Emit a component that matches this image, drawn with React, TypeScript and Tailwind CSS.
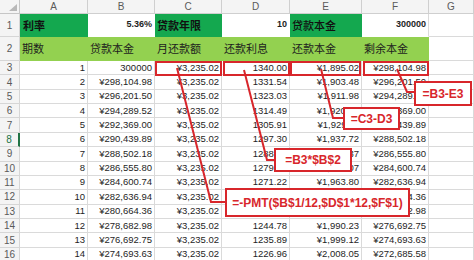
import React from "react";

const cols = ["A", "B", "C", "D", "E", "F", "G"];

const colB = [
  "300000", "¥298,104.98", "¥296,201.50", "¥294,289.52", "¥292,369.00", "¥290,439.89", "¥288,502.18",
  "¥286,555.80", "¥284,600.74", "¥282,636.94", "¥280,664.36", "¥278,682.98", "¥276,692.75", "¥274,693.63",
];
const colD = [
  "1340.00", "1331.54", "1323.03", "1314.49", "1305.91", "1297.30", "1288.64",
  "1279.95", "1271.22", "1262.44", "1253.63", "1244.78", "1235.89", "1226.96",
];
const colE = [
  "¥1,895.02", "¥1,903.48", "¥1,911.98", "¥1,920.53", "¥1,929.11", "¥1,937.72", "¥1,946.37",
  "¥1,955.07", "¥1,963.80", "¥1,972.58", "¥1,981.39", "¥1,990.23", "¥1,999.12", "¥2,008.05",
];
const colF = [
  "¥298,104.98", "¥296,201.50", "¥294,289.52", "¥292,369.00", "¥290,439.89", "¥288,502.18", "¥286,555.80",
  "¥284,600.74", "¥282,636.94", "¥280,664.36", "¥278,682.98", "¥276,692.75", "¥274,693.63", "¥272,685.58",
];

const CJK = { fontFamily: '"Noto Sans CJK SC", "Liberation Sans", sans-serif' };
const NUM = { fontFamily: '"Liberation Sans", "Noto Sans CJK SC", sans-serif' };

function Num({ children, bold }: { children: React.ReactNode; bold?: boolean }) {
  return (
    <div
      className={`flex items-center justify-end pr-[2px] border-r border-b border-[#dadada] text-[#1e1e1e] ${bold ? "font-bold text-[9px]" : "text-[9.5px]"}`}
      style={NUM}
    >
      {children}
    </div>
  );
}

export default function App() {
  const dataRows = colB.map((b, i) => ({
    n: i + 3,
    a: String(i + 1),
    b,
    c: "¥3,235.02",
    d: colD[i],
    e: colE[i],
    f: colF[i],
  }));

  return (
    <div className="relative w-[474px] h-[260px] overflow-hidden bg-white" style={NUM}>
      <div className="grid grid-cols-[20px_68px_67px_67px_68px_72px_67px_45px] grid-rows-[14px_23px_24px_repeat(14,14.36px)]">
        {/* corner */}
        <div className="relative bg-[#f4f4f4] border-r border-b border-[#c6c6c6]">
          <svg className="absolute left-[9px] top-[4px]" width="8" height="7" viewBox="0 0 8 7">
            <polygon points="8,0 8,7 0,7" fill="#b8b8b8" />
          </svg>
        </div>
        {cols.map((c) => (
          <div
            key={c}
            className="flex items-center justify-center bg-[#f4f4f4] border-r border-b border-[#cfcfcf] text-[10px] text-[#5a5a5a]"
          >
            {c}
          </div>
        ))}

        {/* row 1 */}
        <div className="flex items-center justify-center bg-[#f4f4f4] border-r border-b border-[#d6d6d6] text-[10px] text-[#5a5a5a]">1</div>
        <div className="flex items-center pl-[3px] bg-[#14a84f] border-r border-b border-[#14a84f] text-[11px] font-bold text-[#111]" style={CJK}>利率</div>
        <div className="flex items-center justify-end pr-[2px] border-r border-b border-white text-[9px] font-bold text-[#1e1e1e]">5.36%</div>
        <div className="flex items-center pl-[2px] bg-[#14a84f] border-r border-b border-[#14a84f] text-[11px] font-bold text-[#111]" style={CJK}>贷款年限</div>
        <div className="flex items-center justify-end pr-[2px] border-r border-b border-white text-[9px] font-bold text-[#1e1e1e]">10</div>
        <div className="flex items-center pl-[2px] bg-[#14a84f] border-r border-b border-[#14a84f] text-[11px] font-medium text-[#111]" style={CJK}>贷款本金</div>
        <div className="flex items-center justify-end pr-[2px] border-r border-r-[#dadada] border-b border-b-white text-[9px] font-bold text-[#1e1e1e]">300000</div>
        <div className="border-r border-b border-[#dadada]" />

        {/* row 2 */}
        <div className="flex items-center justify-center bg-[#f4f4f4] border-r border-b border-[#d6d6d6] text-[10px] text-[#5a5a5a]">2</div>
        {["期数", "贷款本金", "月还款额", "还款利息", "还款本金", "剩余本金"].map((t) => (
          <div key={t + "h"} className="flex items-center pl-[2px] bg-[#93d150] border-r border-b border-[#93d150] text-[11px] text-[#1e1e1e]" style={CJK}>
            {t}
          </div>
        ))}
        <div className="border-r border-b border-[#dadada]" />

        {dataRows.map((r) => (
          <React.Fragment key={r.n}>
            <div
              className={`flex items-center justify-center bg-[#f4f4f4] border-b border-[#d6d6d6] text-[10px] ${r.n === 8 ? "text-[#217346] border-r-2 border-r-[#217346]" : "text-[#5a5a5a] border-r"}`}
            >
              {r.n}
            </div>
            <Num>{r.a}</Num>
            <Num>{r.b}</Num>
            <Num>{r.c}</Num>
            <Num>{r.d}</Num>
            <Num>{r.e}</Num>
            <Num>{r.f}</Num>
            <div className="border-r border-b border-[#dadada]" />
          </React.Fragment>
        ))}
      </div>

      {/* red outlines on row 3 */}
      <div className="absolute left-[155px] top-[61px] w-[67px] h-[15px] border-2 border-[#d8262b]" />
      <div className="absolute left-[223px] top-[61px] w-[67px] h-[15px] border-2 border-[#d8262b]" />
      <div className="absolute left-[290px] top-[61px] w-[71px] h-[15px] border-2 border-[#d8262b]" />
      <div className="absolute left-[363px] top-[61px] w-[66px] h-[15px] border-2 border-[#d8262b]" />

      {/* connector lines */}
      <svg className="absolute left-0 top-0" width="474" height="260" viewBox="0 0 474 260">
        <g fill="none" stroke="#d8262b" strokeWidth="2" strokeLinejoin="miter">
          <polyline points="177,68 211,202 226,202" />
          <polyline points="244,70 267,160 275,160" />
          <polyline points="321,69 333,118 344,118" />
          <polyline points="397,69 407,92 415,92" />
        </g>
      </svg>

      {/* callouts */}
      <div className="absolute left-[414px] top-[81px] w-[58px] h-[25px] flex items-center justify-center bg-white border-2 border-[#d8262b] text-[12px] font-bold text-[#d8262b]">
        =B3-E3
      </div>
      <div className="absolute left-[343px] top-[107px] w-[57px] h-[23px] flex items-center justify-center bg-white border-2 border-[#d8262b] text-[12px] font-bold text-[#d8262b]">
        =C3-D3
      </div>
      <div className="absolute left-[274px] top-[148px] w-[78px] h-[24px] flex items-center justify-center bg-white border-2 border-[#d8262b] text-[12px] font-bold text-[#d8262b]">
        =B3*$B$2
      </div>
      <div className="absolute left-[225px] top-[188px] w-[185px] h-[29px] flex items-center justify-center bg-white border-2 border-[#d8262b] text-[12px] font-bold text-[#d8262b] whitespace-nowrap">
        =-PMT($B$1/12,$D$1*12,$F$1)
      </div>
    </div>
  );
}
